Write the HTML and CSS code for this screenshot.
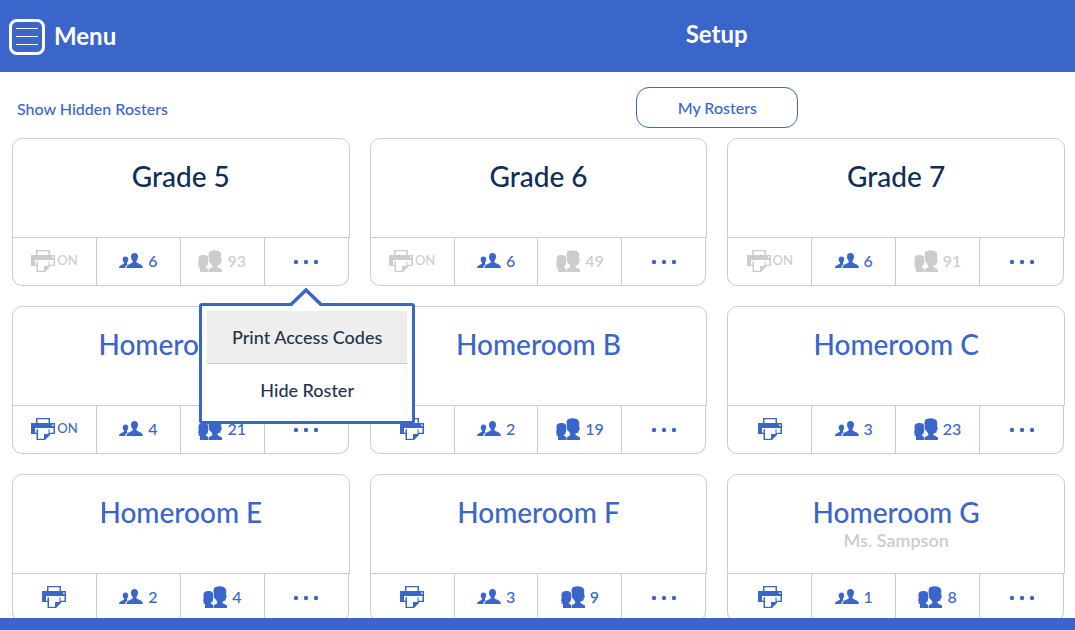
FILE: index.html
```html
<!DOCTYPE html>
<html lang="en">
<head>
<meta charset="utf-8">
<title>Setup</title>
<meta name="viewport" content="width=device-width, initial-scale=1">
<link rel="stylesheet" href="styles.css">
</head>
<body>
<header class="topbar">
  <button class="menu" type="button">
    <svg class="menu-icon" viewBox="0 0 36 36" aria-hidden="true"><rect x="1.500" y="1.500" width="33" height="33" rx="6.500" fill="none" stroke="currentColor" stroke-width="3"/><path d="M7 9.500h22M7 17.500h22M7 25.500h22" stroke="currentColor" stroke-width="1.200"/></svg>
    <span class="menu-label">Menu</span>
  </button>
  <h1 class="page-title">Setup</h1>
</header>
<main>
  <div class="toolbar">
    <a class="hidden-link" href="#">Show Hidden Rosters</a>
    <button class="filter" type="button">My Rosters</button>
  </div>
  <div class="rosters" id="rosters"></div>
</main>
<footer class="bottombar"></footer>
<script src="app.js"></script>
</body>
</html>
```

FILE: app.js
```js
const icons = {
  print: '<svg class="icon" viewBox="0 0 24 22" aria-hidden="true"><path fill="currentColor" fill-rule="evenodd" d="M5 0H19V5H24V16H19V17L14 22H5.500V16H0V5H5ZM6.500 1.300V5H17.500V1.300ZM21 6.500V8H22.600V6.500ZM4 10V14.700H5.500V11.200H18.500V14.700H22.500V10ZM7 11.200V20.700H13V16H17.500V11.200Z"/><path fill="currentColor" d="M0 9H3.800V16H0Z"/></svg>',
  adults: '<svg class="icon" viewBox="0 0 24 22" aria-hidden="true"><path fill="currentColor" d="M15.500 3C18 3 19.200 4.700 19 7C18.900 9 18 10 17.500 10.800V12.500C19 13.500 23.800 14 24 18H7.500C7.800 14 12.500 13.500 13.700 12.500V10.800C12.800 10 12.100 9 12 7C11.900 4.700 13 3 15.500 3ZM6.500 6.500C8.500 6.500 9.300 8 9.200 9.500C9.100 11 8.500 12 8 12.500V13.700L8.800 14.200C7.300 15 6.500 16.300 6.200 18H0C0 15.200 3.500 14.600 5 13.700V12.500C4.300 12 3.700 11 3.700 9.500C3.600 8 4.500 6.500 6.500 6.500Z"/></svg>',
  students: '<svg class="icon" viewBox="0 0 24 22" aria-hidden="true"><path fill="currentColor" d="M5 5C8 4.600 9.800 5.800 10 7.500L10.300 12L9.500 15.500L7.500 17L10 19V22H2V18L.5 17.500L.8 15.500L0 14.800L.6 12L.5 8C.8 6 2.500 5.200 5 5ZM12.500 1C16 -.5 20.500 0 22.500 2.500C24 4.500 22.800 7 23.200 9L24 11L22.800 12L22.500 14.500L19.500 15.500V17L24 19.500V22H10.500V19.500L14.500 17L13.500 14.500L11 11.500L10.500 5C10.500 3 11.300 1.600 12.500 1Z"/></svg>',
  more: '<svg class="dots" viewBox="0 0 26 6" aria-hidden="true"><g fill="currentColor"><circle cx="3" cy="3" r="2.200"/><circle cx="13" cy="3" r="2.200"/><circle cx="23" cy="3" r="2.200"/></g></svg>'
};

const rosters = [
  { name: 'Grade 5', grade: true, on: true, adults: 6, students: 93, open: true },
  { name: 'Grade 6', grade: true, on: true, adults: 6, students: 49 },
  { name: 'Grade 7', grade: true, on: true, adults: 6, students: 91 },
  { name: 'Homeroom A', on: true, adults: 4, students: 21 },
  { name: 'Homeroom B', adults: 2, students: 19 },
  { name: 'Homeroom C', adults: 3, students: 23 },
  { name: 'Homeroom E', adults: 2, students: 4 },
  { name: 'Homeroom F', adults: 3, students: 9 },
  { name: 'Homeroom G', teacher: 'Ms. Sampson', adults: 1, students: 8 }
];

const menu = `<div class="popover">
  <svg class="arrow" viewBox="0 0 34 18" aria-hidden="true"><path d="M2 18L17 3L32 18Z" fill="#fff"/><path d="M1 17.500L17 2L33 17.500" fill="none" stroke="#3a66cc" stroke-width="3.500"/></svg>
  <button class="option active" type="button">Print Access Codes</button>
  <button class="option" type="button">Hide Roster</button>
</div>`;

document.getElementById('rosters').innerHTML = rosters.map(r => `
<article class="card${r.grade ? ' grade' : ''}">
  <div class="card-head">
    <h2 class="name">${r.name}</h2>
    ${r.teacher ? `<p class="teacher">${r.teacher}</p>` : ''}
  </div>
  <div class="actions">
    <button class="action print" type="button" aria-label="Print">${icons.print}${r.on ? '<span class="on">ON</span>' : ''}</button>
    <button class="action" type="button">${icons.adults}<span>${r.adults}</span></button>
    <button class="action students" type="button">${icons.students}<span>${r.students}</span></button>
    <div class="more"><button class="action" type="button" aria-label="More">${icons.more}</button>${r.open ? menu : ''}</div>
  </div>
</article>`).join('');
```

FILE: styles.css
```css
* { box-sizing: border-box; }

body {
  margin: 0;
  height: 100vh;
  overflow: hidden;
  display: flex;
  flex-direction: column;
  background: #fff;
  color: #3a66cc;
  font-family: Lato, "Open Sans", sans-serif;
}

button {
  margin: 0;
  padding: 0;
  border: 0;
  background: none;
  color: inherit;
  font: inherit;
  cursor: pointer;
}

.topbar {
  flex: none;
  display: grid;
  grid-template-columns: 1fr 2fr;
  align-items: center;
  height: 72px;
  background: #3a66cc;
  color: #fff;
}

.menu {
  display: flex;
  align-items: center;
  gap: 9px;
  padding: 2px 0 0 9px;
  font-size: 24px;
  font-weight: 700;
}

.menu-icon { width: 36px; height: 36px; }
.menu-label { padding-bottom: 3px; }

.page-title {
  margin: 0;
  padding-bottom: 5px;
  font-size: 24px;
  font-weight: 700;
  text-align: center;
}

main { flex: 1; min-height: 0; overflow: hidden; }

.toolbar {
  display: grid;
  grid-template-columns: 1fr 2fr;
  align-items: center;
  padding: 15px 0 10px 2px;
  font-size: 16px;
  font-weight: 500;
}

.hidden-link {
  padding: 2px 0 0 15px;
  color: inherit;
  text-decoration: none;
}

.filter {
  justify-self: center;
  width: 162px;
  height: 41px;
  border: 1px solid #3a66cc;
  border-radius: 13px;
}

.rosters {
  display: grid;
  grid-template-columns: repeat(3, 1fr);
  gap: 20px;
  padding: 0 10px 20px 12px;
}

.card-head {
  height: 100px;
  padding-top: 20px;
  border: 1px solid #ccc;
  border-radius: 10px 10px 0 0;
  text-align: center;
}

.name {
  margin: 0;
  font-size: 28px;
  font-weight: 500;
  line-height: 35px;
}

.grade .name { color: #0f2f57; }

.teacher {
  margin: 0;
  color: #ccc;
  font-size: 18px;
  font-weight: 600;
  line-height: 20px;
}

.actions {
  display: grid;
  grid-template-columns: 84fr 84fr 84fr 83fr;
  height: 48px;
  margin-right: 1px;
  border: 1px solid #ccc;
  border-top: 0;
  border-radius: 0 0 10px 10px;
}

.action {
  display: flex;
  align-items: center;
  justify-content: center;
  gap: 5px;
  width: 100%;
  height: 100%;
  padding-bottom: 1px;
  border-right: 1px solid #ccc;
  font-size: 16px;
  font-weight: 500;
}

.action span { padding-bottom: 1px; }

.print { gap: 2px; }
.print .on { padding-bottom: 2px; font-size: 13px; }

.grade .print,
.grade .students { color: #ccc; }

.icon { width: 24px; height: 22px; }
.dots { width: 26px; height: 6px; }

.more { position: relative; }
.more .action { padding: 0; border-right: 0; }

.popover {
  position: absolute;
  z-index: 2;
  top: 65px;
  left: 50%;
  width: 216px;
  margin-left: -107px;
  padding: 5px;
  border: 3px solid #3a66cc;
  border-radius: 3px;
  background: #fff;
}

.arrow {
  position: absolute;
  top: -18px;
  left: 50%;
  width: 34px;
  height: 18px;
  margin-left: -18px;
}

.option {
  display: block;
  width: 100%;
  height: 52px;
  color: #1c3550;
  font-size: 18px;
  font-weight: 500;
}

.option.active {
  height: 53px;
  border-bottom: 1px solid #ccc;
  background: #eee;
}

.bottombar {
  flex: none;
  height: 12px;
  background: #3a66cc;
}
```
